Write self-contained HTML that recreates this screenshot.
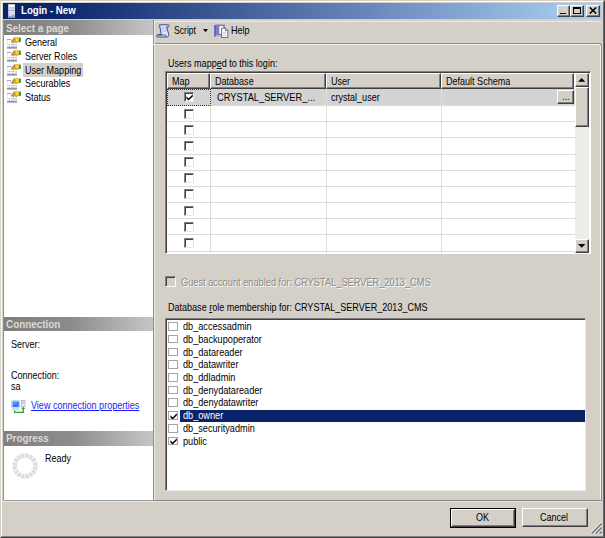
<!DOCTYPE html>
<html><head><meta charset="utf-8"><title>Login - New</title>
<style>
*{box-sizing:border-box;margin:0;padding:0}
html,body{width:605px;height:538px;overflow:hidden;background:#d4d0c8}
body{font-family:"Liberation Sans",sans-serif;font-size:10.5px;color:#000;position:relative}
.abs{position:absolute}
.t{position:absolute;white-space:nowrap;line-height:12px;font-size:10.5px;transform-origin:0 50%;transform:scaleX(.86)}
.b{font-weight:bold}
u{text-decoration:underline}
#win{position:absolute;left:0;top:0;width:605px;height:538px;background:#d4d0c8;border:1px solid;border-color:#d4d0c8 #404040 #404040 #d4d0c8}
#win2{position:absolute;left:1px;top:1px;width:603px;height:536px;border:1px solid;border-color:#fff #6a6a6a #808080 #fff}
#title{position:absolute;left:3.3px;top:3.3px;width:598.2px;height:15.4px;background:linear-gradient(90deg,#0a246a 0%,#0a246a 8%,#a6caf0 96%,#a6caf0 100%)}
.cb{position:absolute;top:4.7px;height:12px;background:#d4d0c8;border:1px solid;border-color:#fff #404040 #404040 #fff;box-shadow:inset -1px -1px 0 #808080}
#left{position:absolute;left:3px;top:20px;width:151px;height:481.4px;background:#fff;border:1px solid #8c8c8c;border-width:0 1px 1.4px 1.6px;border-left-color:#909090;border-bottom-color:#a0a0a0;border-radius:0 0 0 2px}
.hdr{position:absolute;left:0;width:149px;height:15.3px;background:linear-gradient(90deg,#7f7f7f 0%,#8c8c8c 45%,#c6c6c6 100%)}
.hdr .t{left:1.8px;top:1.9px;color:#dedad2;font-weight:bold;font-size:10.5px;transform:scaleX(.94)}
.gh{position:absolute;top:73px;height:16px;background:#d4d0c8;border:1px solid;border-color:#fff #404040 #404040 #fff;box-shadow:inset -1px -1px 0 #808080}
.vl{position:absolute;top:89px;width:1px;height:164px;background:#dedcd6}
.hl{position:absolute;left:167px;width:408px;height:1px;background:#dedcd6}
.ck{position:absolute;left:184px;width:10px;height:10px;background:#fff;border:1px solid;border-color:#808080 #e8e6e0 #e8e6e0 #808080;box-shadow:inset 1px 1px 0 #404040}
.fc{position:absolute;left:168.4px;width:9.3px;height:8.8px;background:#fff;border:1px solid #a4a4a4}
.sb{position:absolute;left:575px;width:14px;background:#d4d0c8;border:1px solid;border-color:#fff #404040 #404040 #fff;box-shadow:inset -1px -1px 0 #808080}
.btn{position:absolute;top:508px;width:66px;height:20px;background:#d4d0c8;border:1px solid;border-color:#fff #404040 #404040 #fff;box-shadow:inset -1px -1px 0 #808080}
</style></head><body>
<div id="win"></div><div id="win2"></div>
<div id="title">
 <svg class="abs" style="left:4.4px;top:0.8px" width="7.6" height="14" viewBox="0 0 8 14" preserveAspectRatio="none"><defs><linearGradient id="tg" x1="0" y1="0" x2="0" y2="1"><stop offset="0" stop-color="#fff"/><stop offset="1" stop-color="#c4ccf0"/></linearGradient></defs><rect x="0.3" y="0.3" width="7" height="13" fill="url(#tg)" stroke="#c8cce0" stroke-width=".6"/><rect x="0.8" y="3.4" width="6" height="1" fill="#a8b0cc"/><rect x="0.8" y="5.8" width="6" height=".9" fill="#8c96b8"/><rect x="0.6" y="12.4" width="6.4" height=".9" fill="#7a80a0"/><rect x="4.9" y="10.8" width="1.4" height="1.2" fill="#4ac040"/></svg>
 <div class="t b" style="left:17.8px;top:1.8px;color:#fff;font-size:10px;transform:scaleX(.965)">Login - New</div>
</div>
<div class="cb" style="left:557.4px;width:12.6px"><div class="abs" style="left:1.6px;top:7.1px;width:6px;height:1.7px;background:#000"></div></div>
<div class="cb" style="left:570.2px;width:13.6px"><div class="abs" style="left:2.2px;top:1.6px;width:7.6px;height:6.8px;border:1px solid #000;border-top-width:2.2px"></div></div>
<div class="cb" style="left:586px;width:13.7px"><svg class="abs" style="left:2.2px;top:1.4px" width="8" height="7" viewBox="0 0 8 7"><path d="M0.8 0.4L7.2 6.6M7.2 0.4L0.8 6.6" stroke="#000" stroke-width="1.5"/></svg></div>

<div id="left">
 <div class="hdr" style="top:0"><div class="t">Select a page</div></div>

<svg class="abs" style="left:1.8px;top:15.8px" width="16" height="14" viewBox="0 0 16 14"><rect x="1" y="3" width="10" height="9" fill="#fff"/><path d="M1.3 11V3.6" stroke="#dcdff4" stroke-width=".8" fill="none"/><path d="M1 3.5H5" stroke="#9a9ee8" stroke-width="1"/><rect x="9.1" y="7.6" width="1.8" height="3.6" fill="#c4d8fc"/><rect x="1" y="11.1" width="10" height="1.5" fill="#8c8c8c"/><rect x="2.8" y="8.1" width="1" height="1" fill="#7880e0"/><rect x="2.8" y="9.9" width="1" height="1" fill="#7880e0"/><path d="M5 8.6H8.6M5 10.4H8.6" stroke="#b0b8f0" stroke-width="1"/><path d="M4.6 6L8 1.6L12 1L13.6 2.6L12.8 6L10.2 7L8.8 6.2L7.2 7.4L6.2 6.4Z" fill="#dca024"/><path d="M8.8 2L11.8 1.6L13 3L12.2 5.2L10 5.6Z" fill="#fcd43c"/><path d="M4.6 6L8 1.6L9 1.5L5.6 6.2Z" fill="#c09060"/><path d="M6.4 6.2L9.2 2.6L9.8 3L7.2 6.8Z" fill="#a8a038"/><path d="M13 1.4L15 1.8L15 5.8L12.8 6.2Z" fill="#3fa045"/></svg>
 <div class="t" style="left:21px;top:16.3px">General</div>
<svg class="abs" style="left:1.8px;top:29.4px" width="16" height="14" viewBox="0 0 16 14"><rect x="1" y="3" width="10" height="9" fill="#fff"/><path d="M1.3 11V3.6" stroke="#dcdff4" stroke-width=".8" fill="none"/><path d="M1 3.5H5" stroke="#9a9ee8" stroke-width="1"/><rect x="9.1" y="7.6" width="1.8" height="3.6" fill="#c4d8fc"/><rect x="1" y="11.1" width="10" height="1.5" fill="#8c8c8c"/><rect x="2.8" y="8.1" width="1" height="1" fill="#7880e0"/><rect x="2.8" y="9.9" width="1" height="1" fill="#7880e0"/><path d="M5 8.6H8.6M5 10.4H8.6" stroke="#b0b8f0" stroke-width="1"/><path d="M4.6 6L8 1.6L12 1L13.6 2.6L12.8 6L10.2 7L8.8 6.2L7.2 7.4L6.2 6.4Z" fill="#dca024"/><path d="M8.8 2L11.8 1.6L13 3L12.2 5.2L10 5.6Z" fill="#fcd43c"/><path d="M4.6 6L8 1.6L9 1.5L5.6 6.2Z" fill="#c09060"/><path d="M6.4 6.2L9.2 2.6L9.8 3L7.2 6.8Z" fill="#a8a038"/><path d="M13 1.4L15 1.8L15 5.8L12.8 6.2Z" fill="#3fa045"/></svg>
 <div class="t" style="left:21px;top:29.9px">Server Roles</div>
 <div class="abs" style="left:18.6px;top:43.2px;width:60px;height:13.4px;background:#d4d0c8"></div>
<svg class="abs" style="left:1.8px;top:43.1px" width="16" height="14" viewBox="0 0 16 14"><rect x="1" y="3" width="10" height="9" fill="#fff"/><path d="M1.3 11V3.6" stroke="#dcdff4" stroke-width=".8" fill="none"/><path d="M1 3.5H5" stroke="#9a9ee8" stroke-width="1"/><rect x="9.1" y="7.6" width="1.8" height="3.6" fill="#c4d8fc"/><rect x="1" y="11.1" width="10" height="1.5" fill="#8c8c8c"/><rect x="2.8" y="8.1" width="1" height="1" fill="#7880e0"/><rect x="2.8" y="9.9" width="1" height="1" fill="#7880e0"/><path d="M5 8.6H8.6M5 10.4H8.6" stroke="#b0b8f0" stroke-width="1"/><path d="M4.6 6L8 1.6L12 1L13.6 2.6L12.8 6L10.2 7L8.8 6.2L7.2 7.4L6.2 6.4Z" fill="#dca024"/><path d="M8.8 2L11.8 1.6L13 3L12.2 5.2L10 5.6Z" fill="#fcd43c"/><path d="M4.6 6L8 1.6L9 1.5L5.6 6.2Z" fill="#c09060"/><path d="M6.4 6.2L9.2 2.6L9.8 3L7.2 6.8Z" fill="#a8a038"/><path d="M13 1.4L15 1.8L15 5.8L12.8 6.2Z" fill="#3fa045"/></svg>
 <div class="t" style="left:21px;top:43.6px">User Mapping</div>
<svg class="abs" style="left:1.8px;top:56.7px" width="16" height="14" viewBox="0 0 16 14"><rect x="1" y="3" width="10" height="9" fill="#fff"/><path d="M1.3 11V3.6" stroke="#dcdff4" stroke-width=".8" fill="none"/><path d="M1 3.5H5" stroke="#9a9ee8" stroke-width="1"/><rect x="9.1" y="7.6" width="1.8" height="3.6" fill="#c4d8fc"/><rect x="1" y="11.1" width="10" height="1.5" fill="#8c8c8c"/><rect x="2.8" y="8.1" width="1" height="1" fill="#7880e0"/><rect x="2.8" y="9.9" width="1" height="1" fill="#7880e0"/><path d="M5 8.6H8.6M5 10.4H8.6" stroke="#b0b8f0" stroke-width="1"/><path d="M4.6 6L8 1.6L12 1L13.6 2.6L12.8 6L10.2 7L8.8 6.2L7.2 7.4L6.2 6.4Z" fill="#dca024"/><path d="M8.8 2L11.8 1.6L13 3L12.2 5.2L10 5.6Z" fill="#fcd43c"/><path d="M4.6 6L8 1.6L9 1.5L5.6 6.2Z" fill="#c09060"/><path d="M6.4 6.2L9.2 2.6L9.8 3L7.2 6.8Z" fill="#a8a038"/><path d="M13 1.4L15 1.8L15 5.8L12.8 6.2Z" fill="#3fa045"/></svg>
 <div class="t" style="left:21px;top:57.2px">Securables</div>
<svg class="abs" style="left:1.8px;top:70.3px" width="16" height="14" viewBox="0 0 16 14"><rect x="1" y="3" width="10" height="9" fill="#fff"/><path d="M1.3 11V3.6" stroke="#dcdff4" stroke-width=".8" fill="none"/><path d="M1 3.5H5" stroke="#9a9ee8" stroke-width="1"/><rect x="9.1" y="7.6" width="1.8" height="3.6" fill="#c4d8fc"/><rect x="1" y="11.1" width="10" height="1.5" fill="#8c8c8c"/><rect x="2.8" y="8.1" width="1" height="1" fill="#7880e0"/><rect x="2.8" y="9.9" width="1" height="1" fill="#7880e0"/><path d="M5 8.6H8.6M5 10.4H8.6" stroke="#b0b8f0" stroke-width="1"/><path d="M4.6 6L8 1.6L12 1L13.6 2.6L12.8 6L10.2 7L8.8 6.2L7.2 7.4L6.2 6.4Z" fill="#dca024"/><path d="M8.8 2L11.8 1.6L13 3L12.2 5.2L10 5.6Z" fill="#fcd43c"/><path d="M4.6 6L8 1.6L9 1.5L5.6 6.2Z" fill="#c09060"/><path d="M6.4 6.2L9.2 2.6L9.8 3L7.2 6.8Z" fill="#a8a038"/><path d="M13 1.4L15 1.8L15 5.8L12.8 6.2Z" fill="#3fa045"/></svg>
 <div class="t" style="left:21px;top:70.8px">Status</div>
 <div class="hdr" style="top:297.3px;height:14.2px"><div class="t" style="top:1px">Connection</div></div>
 <div class="t" style="left:7px;top:318px">Server:</div>
 <div class="t" style="left:7px;top:349px">Connection:</div>
 <div class="t" style="left:7px;top:360px">sa</div>
 <svg class="abs" style="left:7px;top:379.5px" width="15" height="13.5" viewBox="0 0 15 13.5"><rect x="0.6" y="0.6" width="8.2" height="7.6" rx="1" fill="#dfe6f6" stroke="#a8b4cc" stroke-width=".6"/><rect x="1.6" y="1.6" width="6.2" height="5.4" fill="#2a7af0"/><rect x="2.4" y="2.6" width="3.4" height="1.6" fill="#5aa0ff"/><path d="M1 9.2H8.6L9.2 10.4H0.4Z" fill="#cfd4e0"/><rect x="10.6" y="0.4" width="3.4" height="6.4" fill="#eef0f4" stroke="#9aa0a8" stroke-width=".6"/><rect x="11.4" y="1.4" width="1.8" height="2.6" fill="#c4c8d4"/><path d="M3.6 10.6V12.4H12.2V8.2" stroke="#2da02d" stroke-width="1.3" fill="none"/><path d="M10.2 9L12.2 6.8L14.2 9Z" fill="#2da02d"/></svg>
 <div class="t" style="left:27px;top:379.4px;color:#1a1aff;text-decoration:underline">View connection properties</div>
 <div class="hdr" style="top:411px;height:14.8px"><div class="t" style="top:1.2px">Progress</div></div>
 <div class="t" style="left:40.5px;top:431.8px">Ready</div>

 <svg class="abs" style="left:7.9px;top:433.2px" width="26" height="26" viewBox="0 0 26 26"><path d="M25.79 13.54L25.02 17.40L20.70 15.82L21.19 13.34ZM24.61 18.39L22.42 21.66L19.04 18.55L20.44 16.45ZM21.66 22.42L18.39 24.61L16.45 20.44L18.55 19.04ZM17.40 25.02L13.54 25.79L13.34 21.19L15.82 20.70ZM12.46 25.79L8.60 25.02L10.18 20.70L12.66 21.19ZM7.61 24.61L4.34 22.42L7.45 19.04L9.55 20.44ZM3.58 21.66L1.39 18.39L5.56 16.45L6.96 18.55ZM0.98 17.40L0.21 13.54L4.81 13.34L5.30 15.82ZM0.21 12.46L0.98 8.60L5.30 10.18L4.81 12.66ZM1.39 7.61L3.58 4.34L6.96 7.45L5.56 9.55ZM4.34 3.58L7.61 1.39L9.55 5.56L7.45 6.96ZM8.60 0.98L12.46 0.21L12.66 4.81L10.18 5.30ZM13.54 0.21L17.40 0.98L15.82 5.30L13.34 4.81ZM18.39 1.39L21.66 3.58L18.55 6.96L16.45 5.56ZM22.42 4.34L24.61 7.61L20.44 9.55L19.04 7.45ZM25.02 8.60L25.79 12.46L21.19 12.66L20.70 10.18Z" fill="#dddddd"/></svg>
</div>
<!-- right panel -->
<div class="abs" style="left:154px;top:21px;width:447px;height:1px;background:#ebe9e4"></div>
<div class="abs" style="left:153px;top:43px;width:448.6px;height:459px;border:1px solid #8c8c8a;border-radius:0 3px 0 0;border-left:0;border-bottom:0;box-shadow:inset -1px 1px 0 #f4f3f0"></div>
<div class="abs" style="left:154px;top:21px;width:1px;height:480px;background:#ebe9e4"></div>
<div class="abs" style="left:154px;top:500px;width:447px;height:1px;background:#868686"></div>
<div class="abs" style="left:3px;top:501.4px;width:599px;height:1px;background:#e6e4de"></div>
<!-- toolbar -->
<svg class="abs" style="left:156px;top:23.5px" width="15" height="14" viewBox="0 0 15 14"><path d="M3.4 0.8H12.2C13.6 0.8 13.8 2.6 12.4 2.8H10.6L12.8 10.6C13 12.4 12 13 10.6 13H1.6C0.2 13 0.2 11 1.6 10.8H5.4Z" fill="#dde6fa" stroke="#2c3a78" stroke-width=".9" stroke-linejoin="round"/><path d="M1.4 11H9.6C10.4 11.2 10.4 12.6 9.8 12.9" fill="none" stroke="#2c3a78" stroke-width=".8"/><path d="M5 3.6H9.6M5.6 5.4H10.2M6.2 7.2H10.6" stroke="#a8b8e8" stroke-width=".8"/></svg>
<div class="t" style="left:173.6px;top:23.8px;transform:scaleX(.82)">Script</div>
<svg class="abs" style="left:203.3px;top:29.3px" width="5" height="3.2" viewBox="0 0 5 3.2"><path d="M0 0H5L2.5 3.2Z" fill="#000"/></svg>
<svg class="abs" style="left:213.5px;top:23.5px" width="15" height="14.5" viewBox="0 0 15 14.5"><path d="M0.4 1.2L2 0.4H11V11.2L9.4 12.6H0.4Z" fill="#7c7cd0"/><path d="M0.4 1.2H1.8V12.6H0.4Z" fill="#5858b0"/><path d="M1.8 11.6H10.6L9.4 12.6H1.8Z" fill="#d8d8f0"/><path d="M4.8 1.6H8.6L10.2 3.2V10.4H4.8Z" fill="#fff" stroke="#5a5a6a" stroke-width=".7"/><path d="M7.6 4.2H11.6L13.8 6.4V13.6H7.6Z" fill="#fff" stroke="#4a4a5a" stroke-width=".8"/><path d="M11.4 4.4V6.6H13.6" fill="none" stroke="#4a4a5a" stroke-width=".7"/><path d="M9 8.4H12.2M9 10H12.2M9 11.6H12.2" stroke="#b8bccc" stroke-width=".7"/></svg>
<div class="t" style="left:231px;top:23.8px">Help</div>
<div class="t" style="left:168px;top:57px">Users mapp<u>e</u>d to this login:</div>
<!-- grid -->
<div class="abs" style="left:165px;top:71px;width:425.5px;height:183.3px;background:#fff;border:1px solid;border-color:#808080 #fff #fff #808080;box-shadow:inset 1px 1px 0 #404040"></div>
<div class="abs" style="left:167px;top:89px;width:408px;height:16px;background:#d3d3d3"></div>

<div class="gh" style="left:167px;width:43px"><div class="t" style="left:4px;top:1px">Map</div></div>
<div class="gh" style="left:210px;width:116px"><div class="t" style="left:4px;top:1px">Database</div></div>
<div class="gh" style="left:326px;width:115px"><div class="t" style="left:4px;top:1px">User</div></div>
<div class="gh" style="left:441px;width:133px"><div class="t" style="left:4px;top:1px">Default Schema</div></div>
<div class="vl" style="left:210px"></div>
<div class="vl" style="left:326px"></div>
<div class="vl" style="left:441px"></div>
<div class="hl" style="top:105px"></div>
<div class="hl" style="top:121px"></div>
<div class="hl" style="top:137px"></div>
<div class="hl" style="top:154px"></div>
<div class="hl" style="top:170px"></div>
<div class="hl" style="top:186px"></div>
<div class="hl" style="top:202px"></div>
<div class="hl" style="top:218px"></div>
<div class="hl" style="top:234px"></div>
<div class="hl" style="top:251px"></div>
<div class="ck" style="top:92.4px"></div>
<div class="ck" style="top:108.5px"></div>
<div class="ck" style="top:124.7px"></div>
<div class="ck" style="top:140.8px"></div>
<div class="ck" style="top:157.0px"></div>
<div class="ck" style="top:173.2px"></div>
<div class="ck" style="top:189.4px"></div>
<div class="ck" style="top:205.6px"></div>
<div class="ck" style="top:221.8px"></div>
<div class="ck" style="top:237.9px"></div>
<svg class="abs" style="left:185.8px;top:94.4px" width="7.2" height="6.8" viewBox="0 0 7.2 6.8"><path d="M0.4 2.2L2.6 4.4L6.8 0.2V2.4L2.6 6.6L0.4 4.4Z" fill="#000"/></svg>
<div class="abs" style="left:166.6px;top:88.8px;width:44.6px;height:16.8px;border:1px dotted #333"></div>
<div class="t" style="left:217px;top:91px;transform:scaleX(.885)">CRYSTAL_SERVER_...</div>
<div class="t" style="left:331px;top:91px">crystal_user</div>
<div class="abs" style="left:557.4px;top:89.8px;width:16.2px;height:14.6px;background:#d4d0c8;border:1px solid;border-color:#fff #404040 #404040 #fff;box-shadow:inset -1px -1px 0 #808080"><div class="t" style="left:3.4px;top:-0.4px">...</div></div>
<!-- scrollbar -->
<div class="abs" style="left:575px;top:73px;width:14px;height:180px;background:#eeedea"></div>
<div class="sb" style="top:73.4px;height:13.4px"><svg class="abs" style="left:2px;top:3.9px" width="7.4" height="3.8" viewBox="0 0 7.4 3.8"><path d="M0 3.8H7.4L3.7 0Z" fill="#000"/></svg></div>
<div class="sb" style="top:86.8px;height:40px"></div>
<div class="sb" style="top:239.4px;height:13.5px"><svg class="abs" style="left:2px;top:4px" width="7.4" height="3.8" viewBox="0 0 7.4 3.8"><path d="M0 0H7.4L3.7 3.8Z" fill="#000"/></svg></div>
<!-- guest -->
<div class="abs" style="left:165.2px;top:276.4px;width:10.8px;height:11px;background:#d4d0c8;border:1px solid;border-color:#808080 #fff #fff #808080;box-shadow:inset 1px 1px 0 #404040"></div>
<div class="t" style="left:181.2px;top:276px;color:#8a8a8a;text-shadow:1px 1px 0 #fff;transform:scaleX(.88)">Guest account enabled for: CRYSTAL_SERVER_2013_CMS</div>
<div class="t" style="left:167.5px;top:300.5px">Database <u>r</u>ole membership for: CRYSTAL_SERVER_2013_CMS</div>
<!-- listbox -->
<div class="abs" style="left:165px;top:318px;width:421.4px;height:172.9px;background:#fff;border:1px solid;border-color:#808080 #eceae6 #eceae6 #808080;box-shadow:inset 1px 1px 0 #404040"></div>
<div class="abs" style="left:179.7px;top:409.6px;width:405.7px;height:12.5px;background:#0a246a"></div>

<div class="fc" style="top:322.0px"></div>
<div class="t" style="left:182.6px;top:320.0px;transform:scaleX(.872)">db_accessadmin</div>
<div class="fc" style="top:334.7px"></div>
<div class="t" style="left:182.6px;top:332.7px;transform:scaleX(.872)">db_backupoperator</div>
<div class="fc" style="top:347.5px"></div>
<div class="t" style="left:182.6px;top:345.5px;transform:scaleX(.872)">db_datareader</div>
<div class="fc" style="top:360.2px"></div>
<div class="t" style="left:182.6px;top:358.2px;transform:scaleX(.872)">db_datawriter</div>
<div class="fc" style="top:372.9px"></div>
<div class="t" style="left:182.6px;top:370.9px;transform:scaleX(.872)">db_ddladmin</div>
<div class="fc" style="top:385.6px"></div>
<div class="t" style="left:182.6px;top:383.6px;transform:scaleX(.872)">db_denydatareader</div>
<div class="fc" style="top:398.4px"></div>
<div class="t" style="left:182.6px;top:396.4px;transform:scaleX(.872)">db_denydatawriter</div>
<div class="fc" style="top:411.1px"></div>
<div class="t" style="left:182.6px;top:409.1px;transform:scaleX(.872);color:#fff">db_owner</div>
<svg class="abs" style="left:169.7px;top:412.5px" width="7.2" height="6.8" viewBox="0 0 7.2 6.8"><path d="M0.4 2.2L2.6 4.4L6.8 0.2V2.4L2.6 6.6L0.4 4.4Z" fill="#000"/></svg>
<div class="fc" style="top:423.8px"></div>
<div class="t" style="left:182.6px;top:421.8px;transform:scaleX(.872)">db_securityadmin</div>
<div class="fc" style="top:436.6px"></div>
<div class="t" style="left:182.6px;top:434.6px;transform:scaleX(.872)">public</div>
<svg class="abs" style="left:169.7px;top:438.0px" width="7.2" height="6.8" viewBox="0 0 7.2 6.8"><path d="M0.4 2.2L2.6 4.4L6.8 0.2V2.4L2.6 6.6L0.4 4.4Z" fill="#000"/></svg>
<!-- buttons -->
<div class="abs" style="left:450.2px;top:508px;width:65.5px;height:19.5px;background:#000"></div>
<div class="btn" style="left:451.2px;top:509px;width:63.5px;height:17.5px"><div class="t" style="left:24.2px;top:1.4px">OK</div></div>
<div class="btn" style="left:522.2px;top:508px;width:65.8px;height:19.4px"><div class="t" style="left:16.5px;top:2.4px">Cancel</div></div>
<svg class="abs" style="left:590px;top:522px" width="12" height="12" viewBox="0 0 12 12"><path d="M11.5 1.5L1.5 11.5M11.5 5.5L5.5 11.5M11.5 9.5L9.5 11.5" stroke="#787878" stroke-width="1.8"/><path d="M11.5 0L0 11.5M11.5 4L4 11.5M11.5 8L8 11.5" stroke="#fff" stroke-width="0.9"/></svg>
</body></html>
